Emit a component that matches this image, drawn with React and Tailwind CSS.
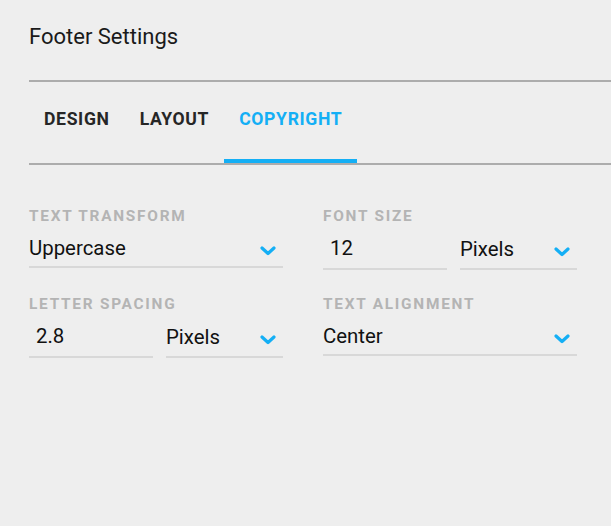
import React from "react";

function Chevron() {
  return (
    <svg width="16" height="10" viewBox="0 0 16 10" className="mt-[6px] shrink-0">
      <polyline
        points="2,2 8,7.5 14,2"
        fill="none"
        stroke="#14aff5"
        strokeWidth="3.2"
        strokeLinecap="round"
        strokeLinejoin="round"
      />
    </svg>
  );
}

function Label({ children }) {
  return (
    <div className="text-[15.4px] leading-[20px] font-bold uppercase tracking-[1.75px] text-[#b4b4b4] mb-[10px]">
      {children}
    </div>
  );
}

function Select({ value, className = "" }) {
  return (
    <div
      className={`flex items-center justify-between border-b-2 border-[#d8d8d8] pb-[6px] pr-[7px] ${className}`}
    >
      <span className="text-[20.4px] leading-[24px] text-[#111]">{value}</span>
      <Chevron />
    </div>
  );
}

function NumberInput({ value }) {
  return (
    <div className="w-[124px] border-b-2 border-[#d8d8d8] pb-[6px] pl-[7px]">
      <span className="text-[20.4px] leading-[24px] text-[#111]">{value}</span>
    </div>
  );
}

export default function App() {
  const tabs = ["Design", "Layout", "Copyright"];
  const active = "Copyright";

  return (
    <div className="min-h-[526px] bg-[#eeeeee] pl-[29px] font-['Roboto',sans-serif] overflow-hidden">
      {/* Header */}
      <div className="pt-[22px] h-[80px]">
        <h1 className="text-[22px] leading-[30px] text-[#1a1a1a] font-normal">Footer Settings</h1>
      </div>

      {/* Tabs */}
      <div className="border-t-2 border-b-2 border-[#acacac]">
        <div className="flex h-[81px]">
          {tabs.map((tab) => (
            <div
              key={tab}
              className={`relative flex items-center px-[15px] pb-[6px] text-[17.6px] font-bold uppercase tracking-[0.65px] ${
                tab === active ? "text-[#14aff5]" : "text-[#262626]"
              }`}
            >
              {tab}
              {tab === active && (
                <span className="absolute left-0 right-0 bottom-0 h-[4px] bg-[#14aff5]"></span>
              )}
            </div>
          ))}
        </div>
      </div>

      {/* Fields */}
      <div className="grid grid-cols-[254px_254px] gap-x-[40px] gap-y-[24px] pt-[41px]">
        <div>
          <Label>Text Transform</Label>
          <Select value="Uppercase" />
        </div>
        <div>
          <Label>Font Size</Label>
          <div className="flex gap-[13px]">
            <NumberInput value="12" />
            <Select value="Pixels" className="flex-1" />
          </div>
        </div>
        <div>
          <Label>Letter Spacing</Label>
          <div className="flex gap-[13px]">
            <NumberInput value="2.8" />
            <Select value="Pixels" className="flex-1" />
          </div>
        </div>
        <div>
          <Label>Text Alignment</Label>
          <Select value="Center" />
        </div>
      </div>
    </div>
  );
}
